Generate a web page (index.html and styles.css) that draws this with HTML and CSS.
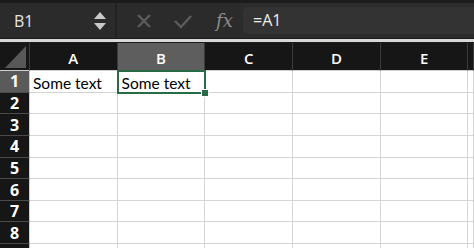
FILE: index.html
```html
<!DOCTYPE html>
<html lang="en">
<head>
    <meta charset="UTF-8">
    <title>Sheet</title>
    <link rel="stylesheet" href="styles.css">
</head>
<body>

<div class="app">
    <!-- Formula bar -->
    <div class="toolbar">
        <div class="name-box">
            <span class="cell-ref">B1</span>
            <span class="stepper">
                <svg width="14" height="26" viewBox="0 0 14 26">
                    <path d="M1 11 L7 4 L13 11 Z" fill="#c9c9c9"/>
                    <path d="M1 15 L7 22 L13 15 Z" fill="#c9c9c9"/>
                </svg>
            </span>
        </div>
        <div class="actions">
            <svg class="icon" width="16" height="16" viewBox="0 0 16 16">
                <path d="M2 2 L14 14 M14 2 L2 14" stroke="#5c5c5c" stroke-width="2.4" fill="none"/>
            </svg>
            <svg class="icon" width="20" height="16" viewBox="0 0 20 16">
                <path d="M2 8 L8 14 L18 3" stroke="#5c5c5c" stroke-width="2.4" fill="none"/>
            </svg>
            <span class="fx">fx</span>
        </div>
        <div class="formula">=A1</div>
    </div>
    <div class="divider"></div>

    <!-- Grid -->
    <div class="sheet">
        <div class="corner"><span class="corner-tri"></span></div>
        <div class="col-head">A</div>
        <div class="col-head active">B</div>
        <div class="col-head">C</div>
        <div class="col-head">D</div>
        <div class="col-head">E</div>
        <div class="col-head"></div>

        <div class="row-head active">1</div>
        <div class="cell">Some text</div>
        <div class="cell selected">Some text<span class="handle"></span></div>
        <div class="cell"></div><div class="cell"></div><div class="cell"></div><div class="cell"></div>

        <div class="row-head">2</div>
        <div class="cell"></div><div class="cell"></div><div class="cell"></div><div class="cell"></div><div class="cell"></div><div class="cell"></div>
        <div class="row-head">3</div>
        <div class="cell"></div><div class="cell"></div><div class="cell"></div><div class="cell"></div><div class="cell"></div><div class="cell"></div>
        <div class="row-head">4</div>
        <div class="cell"></div><div class="cell"></div><div class="cell"></div><div class="cell"></div><div class="cell"></div><div class="cell"></div>
        <div class="row-head">5</div>
        <div class="cell"></div><div class="cell"></div><div class="cell"></div><div class="cell"></div><div class="cell"></div><div class="cell"></div>
        <div class="row-head">6</div>
        <div class="cell"></div><div class="cell"></div><div class="cell"></div><div class="cell"></div><div class="cell"></div><div class="cell"></div>
        <div class="row-head">7</div>
        <div class="cell"></div><div class="cell"></div><div class="cell"></div><div class="cell"></div><div class="cell"></div><div class="cell"></div>
        <div class="row-head">8</div>
        <div class="cell"></div><div class="cell"></div><div class="cell"></div><div class="cell"></div><div class="cell"></div><div class="cell"></div>
        <!-- row 9 only peeks in at the bottom edge -->
        <div class="row-head"></div>
        <div class="cell"></div><div class="cell"></div><div class="cell"></div><div class="cell"></div><div class="cell"></div><div class="cell"></div>
    </div>
</div>

</body>
</html>
```

FILE: styles.css
```css
/* Basic Reset */
* {
    margin: 0;
    padding: 0;
    box-sizing: border-box;
}
body {
    font-family: "Open Sans", Arial, sans-serif;
    background: #ffffff;
    width: 474px;
    height: 248px;
    overflow: hidden;
}
.app {
    display: flex;
    flex-direction: column;
}
/* Formula bar */
.toolbar {
    height: 39px;
    background: #2b2b2b;
    border-top: 3px solid #1c1c1c;
    border-bottom: 1px solid #1c1c1c;
    display: flex;
    align-items: center;
}
.name-box {
    width: 117px;
    height: 100%;
    display: flex;
    align-items: center;
    justify-content: space-between;
    padding: 0 8px 0 14px;
    border-right: 2px solid #222222;
}
.cell-ref {
    color: #e6e6e6;
    font-size: 16px;
}
.stepper {
    display: flex;
    align-items: center;
}
.actions {
    width: 126px;
    display: flex;
    align-items: center;
    padding-left: 19px;
    gap: 21px;
}
.fx {
    font-family: "DejaVu Serif", "Liberation Serif", serif;
    font-style: italic;
    color: #8c8c8c;
    font-size: 18px;
    margin-left: 2px;
}
.formula {
    flex: 1;
    height: 27px;
    background: #333333;
    border-radius: 5px 0 0 5px;
    color: #ececec;
    font-size: 16px;
    line-height: 27px;
    padding-left: 10px;
}
.divider {
    height: 4px;
    background: #d8d8d8;
    border-bottom: 1px solid #1c1c1c;
}
/* Grid */
.sheet {
    display: grid;
    grid-template-columns: 30px 87.6px 87.6px 88px 87.6px 87.6px 1fr;
    grid-template-rows: 28px repeat(9, 21.65px);
}
.corner {
    background: #161616;
    border-right: 1px solid #3c3c3c;
    border-bottom: 1px solid #d0d0d0;
    position: relative;
}
.corner-tri {
    position: absolute;
    right: 3px;
    bottom: 2px;
    width: 0;
    height: 0;
    border-left: 21px solid transparent;
    border-bottom: 22px solid #585858;
}
.col-head {
    background: #161616;
    color: #ffffff;
    font-size: 15px;
    font-weight: 600;
    display: flex;
    align-items: center;
    justify-content: center;
    padding-top: 3px;
    border-right: 1px solid #3c3c3c;
    border-bottom: 1px solid #d0d0d0;
}
.col-head.active {
    background: #5e5e5e;
}
.row-head {
    background: #161616;
    color: #ffffff;
    font-size: 16px;
    font-weight: 700;
    display: flex;
    align-items: center;
    justify-content: center;
    border-right: 1px solid #cfcfcf;
    border-bottom: 1px solid #4a4a4a;
}
.row-head.active {
    background: #5a5a5a;
}
.cell {
    border-right: 1px solid #d4d4d4;
    border-bottom: 1px solid #d4d4d4;
    font-family: Lato, "Open Sans", sans-serif;
    font-size: 15.5px;
    color: #000000;
    padding: 3px 0 0 3px;
    white-space: nowrap;
}
.cell.selected {
    position: relative;
    margin: -1px;
    border: 2px solid #276c45;
    padding: 2px 0 0 3px;
}
.handle {
    position: absolute;
    right: -5px;
    bottom: -5px;
    width: 8px;
    height: 8px;
    background: #276c45;
    border: 1px solid #ffffff;
}
```
